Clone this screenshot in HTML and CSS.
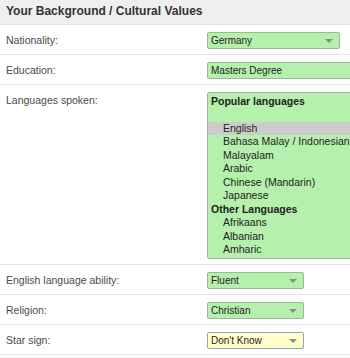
FILE: index.html
```html
<!DOCTYPE html>
<html lang="en">
<head>
  <meta charset="UTF-8">
  <title>Your Background / Cultural Values</title>
  <link rel="stylesheet" href="styles.css">
</head>
<body>
  <div class="panel">
    <h2 class="panel-title">Your Background / Cultural Values</h2>

    <div class="row">
      <label for="nationality">Nationality:</label>
      <span class="dropdown w-wide">
        <select id="nationality" class="filled">
          <option>Germany</option>
        </select>
      </span>
    </div>

    <div class="row">
      <label for="education">Education:</label>
      <span class="dropdown w-long">
        <select id="education" class="filled">
          <option>Masters Degree</option>
        </select>
      </span>
    </div>

    <div class="row row-top">
      <label for="languages">Languages spoken:</label>
      <div class="listbox" id="languages">
        <div class="group">Popular languages</div>
        <div class="opt">&nbsp;</div>
        <div class="opt selected">English</div>
        <div class="opt">Bahasa Malay / Indonesian</div>
        <div class="opt">Malayalam</div>
        <div class="opt">Arabic</div>
        <div class="opt">Chinese (Mandarin)</div>
        <div class="opt">Japanese</div>
        <div class="group">Other Languages</div>
        <div class="opt">Afrikaans</div>
        <div class="opt">Albanian</div>
        <div class="opt">Amharic</div>
      </div>
    </div>

    <div class="row">
      <label for="ability">English language ability:</label>
      <span class="dropdown w-short">
        <select id="ability" class="filled">
          <option>Fluent</option>
        </select>
      </span>
    </div>

    <div class="row">
      <label for="religion">Religion:</label>
      <span class="dropdown w-short">
        <select id="religion" class="filled">
          <option>Christian</option>
        </select>
      </span>
    </div>

    <div class="row">
      <label for="starsign">Star sign:</label>
      <span class="dropdown w-short">
        <select id="starsign" class="empty">
          <option>Don't Know</option>
        </select>
      </span>
    </div>
  </div>
</body>
</html>
```

FILE: styles.css
```css
body {
  margin: 0;
  background: #fff;
  font-family: Arial, "Liberation Sans", sans-serif;
  color: #444;
}
.panel {
  width: 350px;
  overflow: hidden;
}
.panel-title {
  margin: 0;
  height: 24px;
  line-height: 23px;
  padding-left: 6px;
  font-size: 12px;
  font-weight: bold;
  color: #333;
  background: #efefef;
  border-bottom: 1px solid #e2e2e2;
}
.row {
  display: grid;
  grid-template-columns: 201px 1fr;
  align-items: center;
  padding: 7px 0 5px 6px;
  border-bottom: 1px solid #e4e4e4;
}
.row-top {
  align-items: start;
}
.row label {
  font-size: 10.5px;
  line-height: 17px;
  color: #4a4a4a;
}
.dropdown {
  position: relative;
  display: block;
  height: 17px;
}
.dropdown::after {
  content: "";
  position: absolute;
  right: 7px;
  top: 7px;
  border-left: 4px solid transparent;
  border-right: 4px solid transparent;
  border-top: 4px solid #8c8c8c;
  pointer-events: none;
}
.dropdown select {
  appearance: none;
  -webkit-appearance: none;
  display: block;
  width: 100%;
  height: 17px;
  margin: 0;
  padding: 0 0 0 3px;
  font-family: Arial, "Liberation Sans", sans-serif;
  font-size: 10px;
  color: #222;
  border-radius: 2px;
  outline: none;
}
.w-wide { width: 133px; }
.w-long { width: 200px; }
.w-short { width: 97px; }
.filled {
  background: #b5f0ac;
  border: 1px solid #9ab896;
}
.empty {
  background: #ffffcc;
  border: 1px solid #8ea3c0;
}
.listbox {
  width: 180px;
  height: 164px;
  padding: 1px 0 0;
  background: #b5f0ac;
  border: 1px solid #9ab896;
  border-radius: 2px;
  font-size: 10.5px;
  color: #222;
  overflow: hidden;
}
.listbox .group {
  font-weight: bold;
  line-height: 13.45px;
  padding-left: 3px;
}
.listbox .group:first-child {
  padding-top: 1px;
}
.listbox .opt {
  line-height: 13.45px;
  padding-left: 15px;
  white-space: nowrap;
}
.listbox .selected {
  background: #cccccc;
}
```
